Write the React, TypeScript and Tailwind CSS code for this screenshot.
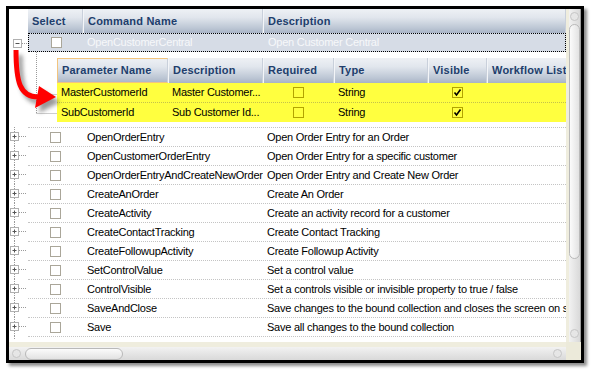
import React from "react";

const rows: [string, string][] = [
  ["OpenOrderEntry", "Open Order Entry for an Order"],
  ["OpenCustomerOrderEntry", "Open Order Entry for a specific customer"],
  ["OpenOrderEntryAndCreateNewOrder", "Open Order Entry and Create New Order"],
  ["CreateAnOrder", "Create An Order"],
  ["CreateActivity", "Create an activity record for a customer"],
  ["CreateContactTracking", "Create Contact Tracking"],
  ["CreateFollowupActivity", "Create Followup Activity"],
  ["SetControlValue", "Set a control value"],
  ["ControlVisible", "Set a controls visible or invisible property to true / false"],
  ["SaveAndClose", "Save changes to the bound collection and closes the screen on save"],
  ["Save", "Save all changes to the bound collection"],
];

const headerBg =
  "bg-[linear-gradient(to_bottom,#eef1f5_0%,#e1e6ed_35%,#bcc6d4_80%,#a8b3c5_100%)]";

function Box({ checked = false, olive = false }: { checked?: boolean; olive?: boolean }) {
  return (
    <span
      className={
        "relative inline-flex w-[11px] h-[11px] items-center justify-center border " +
        (olive ? "border-[#b3a400] bg-transparent" : "border-[#aaa699] bg-white")
      }
    >
      {checked && (
        <svg width="9" height="9" viewBox="0 0 9 9">
          <path d="M1.5 4.5 L3.5 7 L7.5 1.5" stroke="#000" strokeWidth="1.6" fill="none" />
        </svg>
      )}
    </span>
  );
}

function HCell({ w, children, first = false, focus = false }: { w?: string; children: React.ReactNode; first?: boolean; focus?: boolean }) {
  return (
    <div
      className={
        "h-full flex items-center pl-[4px] whitespace-nowrap overflow-hidden text-[11px] font-bold tracking-[0.2px] text-[#213e6c] " +
        (w ?? "flex-1") +
        (first ? "" : " border-l border-l-[#f3f5f8]") +
        " border-r border-r-[#c9d0db]" +
        (focus ? " border border-[#f2c47e]" : "")
      }
    >
      {children}
    </div>
  );
}

function PlusGutter() {
  return (
    <div className="w-[19px] h-full shrink-0">
      <svg width="19" height="19" viewBox="0 0 19 19">
        <line x1="5.5" y1="0" x2="5.5" y2="19" stroke="#9a9a9a" strokeDasharray="1 1" />
        <line x1="10" y1="9.5" x2="18" y2="9.5" stroke="#9a9a9a" strokeDasharray="1 1" />
        <rect x="1.5" y="5.5" width="8" height="8" fill="#fff" stroke="#b0b0b0" />
        <line x1="3.5" y1="9.5" x2="7.5" y2="9.5" stroke="#555" />
        <line x1="5.5" y1="7.5" x2="5.5" y2="11.5" stroke="#555" />
      </svg>
    </div>
  );
}

export default function App() {
  return (
    <div
      className="relative w-[592px] h-[370px] bg-white overflow-hidden pt-[6px] pl-[6px]"
      style={{ fontFamily: '"Liberation Sans", Arial, sans-serif' }}
    >
      <div className="w-[578px] h-[357px] border-[3px] border-black bg-white flex flex-col shadow-[3px_3px_3px_rgba(0,0,0,0.45)]">
        <div className="flex h-[333px]">
          {/* grid area */}
          <div className="w-[557px] h-full flex flex-col overflow-hidden">
            {/* header */}
            <div className="flex h-[24px] shrink-0">
              <div className="w-[19px] shrink-0" />
              <div className={"flex flex-1 h-full " + headerBg}>
                <HCell w="w-[55px]" first>Select</HCell>
                <HCell w="w-[180px]">Command Name</HCell>
                <HCell>Description</HCell>
              </div>
            </div>
            {/* selected row */}
            <div className="flex h-[19px] shrink-0">
              <div className="w-[19px] shrink-0">
                <svg width="19" height="19" viewBox="0 0 19 19">
                  <line x1="13" y1="10.5" x2="19" y2="10.5" stroke="#9a9a9a" strokeDasharray="1 1" />
                  <rect x="4.5" y="6.5" width="8" height="8" fill="#fff" stroke="#b0b0b0" />
                  <line x1="6.5" y1="10.5" x2="10.5" y2="10.5" stroke="#555" />
                </svg>
              </div>
              <div className="flex flex-1 h-full border border-dotted border-black bg-[#d6dce6] text-[11px] tracking-[-0.25px] text-[#f7f8fa]">
                <div className="w-[55px] flex items-center justify-center pr-[1px]">
                  <Box />
                </div>
                <div className="w-[180px] flex items-center pl-[3px] whitespace-nowrap">OpenCustomerCentral</div>
                <div className="flex-1 flex items-center pl-[4px] whitespace-nowrap">Open Customer Central</div>
              </div>
            </div>
            {/* child area */}
            <div className="flex h-[75px] shrink-0">
              <div className="w-[48px] h-full shrink-0">
                <svg width="48" height="75" viewBox="0 0 48 75">
                  <line x1="27.5" y1="0" x2="27.5" y2="61" stroke="#9a9a9a" strokeDasharray="1 1" />
                  <line x1="27.5" y1="61.5" x2="48" y2="61.5" stroke="#9a9a9a" strokeDasharray="1 1" />
                  <line x1="27.5" y1="42.5" x2="48" y2="42.5" stroke="#9a9a9a" strokeDasharray="1 1" />
                </svg>
              </div>
              <div className="flex-1 flex flex-col pt-[6px]">
                <div className={"flex h-[25px] shrink-0 " + headerBg}>
                  <HCell w="w-[111px]" first focus>Parameter Name</HCell>
                  <HCell w="w-[95px]">Description</HCell>
                  <HCell w="w-[71px]">Required</HCell>
                  <HCell w="w-[94px]">Type</HCell>
                  <HCell w="w-[59px]">Visible</HCell>
                  <HCell>Workflow List</HCell>
                </div>
                {[
                  ["MasterCustomerId", "Master Customer..."],
                  ["SubCustomerId", "Sub Customer Id..."],
                ].map(([n, d], i) => (
                  <div
                    key={n}
                    className={
                      "flex shrink-0 bg-[#ffff3f] text-[11px] tracking-[-0.25px] text-black " +
                      (i === 0 ? "h-[20px] border-b border-dotted border-[#c5c24a]" : "h-[19px]")
                    }
                  >
                    <div className="w-[111px] flex items-center pl-[4px] whitespace-nowrap">{n}</div>
                    <div className="w-[95px] flex items-center pl-[4px] whitespace-nowrap overflow-hidden">{d}</div>
                    <div className="w-[71px] flex items-center justify-center">
                      <Box olive />
                    </div>
                    <div className="w-[94px] flex items-center pl-[4px]">String</div>
                    <div className="w-[59px] flex items-center justify-center">
                      <Box olive checked />
                    </div>
                    <div className="flex-1" />
                  </div>
                ))}
              </div>
            </div>
            {/* main rows */}
            <div className="flex flex-col">
              {rows.map(([n, d]) => (
                <div key={n} className="flex h-[19px] shrink-0">
                  <PlusGutter />
                  <div className="flex flex-1 h-full border-t border-dotted border-[#c4c4c4] text-[11px] tracking-[-0.25px] text-black">
                    <div className="w-[55px] flex items-center justify-center pr-[1px]">
                      <Box />
                    </div>
                    <div className="w-[180px] flex items-center pl-[4px] whitespace-nowrap overflow-hidden">{n}</div>
                    <div className="flex-1 flex items-center pl-[4px] whitespace-nowrap overflow-hidden">{d}</div>
                  </div>
                </div>
              ))}
              <div className="flex h-[4px]">
                <div className="w-[19px] h-full">
                  <svg width="19" height="4" viewBox="0 0 19 4">
                    <line x1="5.5" y1="0" x2="5.5" y2="4" stroke="#9a9a9a" strokeDasharray="1 1" />
                  </svg>
                </div>
                <div className="flex-1 border-t border-dotted border-[#c4c4c4]" />
              </div>
            </div>
          </div>
          {/* vertical scrollbar */}
          <div className="w-[15px] h-full flex">
            <div className="w-[4px] h-full bg-[#efedde]" />
            <div className="flex-1 h-full flex flex-col items-center bg-[linear-gradient(to_right,#f2f2f2,#d9d9d9)] border-r border-[#9c9c9c]">
              <div className="mt-[3px] w-[9px] h-[9px] rounded-full bg-[#e6e6e6] border border-[#c6c6c6]" />
              <div className="mt-[3px] w-[11px] h-[235px] rounded-full bg-[linear-gradient(to_right,#fbfbfb,#e2e2e2)] border border-[#b9b9b9]" />
              <div className="flex-1" />
              <div className="mb-[4px] w-[9px] h-[9px] rounded-full bg-[#e6e6e6] border border-[#c6c6c6]" />
            </div>
          </div>
        </div>
        {/* bottom */}
        <div className="flex h-[18px]">
          <div className="w-[557px] h-full flex flex-col">
            <div className="h-[5px] bg-[#efedde]" />
            <div className="flex-1 flex items-center bg-[linear-gradient(to_bottom,#f2f2f2,#d9d9d9)]">
              <div className="ml-[3px] w-[9px] h-[9px] rounded-full bg-[#e6e6e6] border border-[#c6c6c6]" />
              <div className="ml-[4px] w-[98px] h-[12px] rounded-full bg-[linear-gradient(to_bottom,#fbfbfb,#e2e2e2)] border border-[#b9b9b9]" />
              <div className="flex-1" />
              <div className="mr-[4px] w-[9px] h-[9px] rounded-full bg-[#e6e6e6] border border-[#c6c6c6]" />
            </div>
          </div>
          <div className="w-[15px] h-full bg-[#eceada]" />
        </div>
      </div>
      {/* red arrow overlay */}
      <svg className="absolute left-0 top-0" width="80" height="130" viewBox="0 0 80 130">
        <defs>
          <filter id="blur" x="-50%" y="-50%" width="200%" height="200%">
            <feGaussianBlur stdDeviation="2" />
          </filter>
        </defs>
        <g transform="translate(4,5)" opacity="0.55" filter="url(#blur)">
          <path d="M16 50 C16 82 20 97 38 97" stroke="#444" strokeWidth="5" fill="none" />
          <polygon points="39,86 56,97 35,108" fill="#444" />
        </g>
        <path d="M16 50 C16 82 20 97 38 97" stroke="#ff0000" strokeWidth="5" fill="none" />
        <polygon points="39,86 56,97 35,108" fill="#ff0000" />
      </svg>
    </div>
  );
}
